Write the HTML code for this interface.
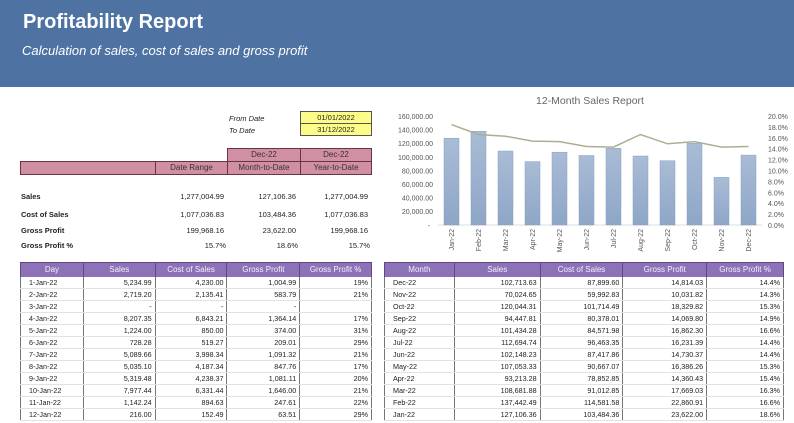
<!DOCTYPE html>
<html><head><meta charset="utf-8"><style>
*{margin:0;padding:0;box-sizing:border-box}
body{width:794px;height:423px;background:#fff;font-family:"Liberation Sans",sans-serif;position:relative;overflow:hidden;color:#222}
.ban{position:absolute;left:0;top:0;width:794px;height:87px;background:#4e73a3}
.t1{position:absolute;left:23px;top:11px;color:#fff;font-weight:bold;font-size:20px}
.t2{position:absolute;left:22px;top:43px;color:#fff;font-style:italic;font-size:13px}
.a{position:absolute;font-size:7.5px;white-space:nowrap}
.r{text-align:right}
.pk{position:absolute;background:#d18fa3;border:1px solid #6b3444;font-size:8px;text-align:center;line-height:12px;color:#333}
.yb{position:absolute;background:#fcfc88;border:1px solid #555;font-size:7.5px;text-align:center;line-height:11px}
table{position:absolute;border-collapse:collapse;font-size:7.2px}
th{background:#8e72b8;color:#f4f0fa;font-weight:normal;height:14px;font-size:8px;border-right:1px solid #5d4a80;border-left:1px solid #5d4a80}
td{height:12px;border-bottom:1px solid #e2e2e2;border-right:1px solid #777;padding:0 3px;text-align:right;white-space:nowrap}
td:first-child{text-align:left;padding-left:8px;border-left:1px solid #777}
table{border-top:1px solid #5d4a80}
</style></head><body>
<div class="ban"></div>
<div class="t1">Profitability Report</div>
<div class="t2">Calculation of sales, cost of sales and gross profit</div>

<div class="a" style="left:229px;top:114px;font-style:italic">From Date</div>
<div class="a" style="left:229px;top:126px;font-style:italic">To Date</div>
<div class="yb" style="left:300px;top:111px;width:72px;height:13px">01/01/2022</div>
<div class="yb" style="left:300px;top:123px;width:72px;height:13px">31/12/2022</div>

<div class="pk" style="left:227px;top:148px;width:74px;height:14px">Dec-22</div>
<div class="pk" style="left:300px;top:148px;width:72px;height:14px">Dec-22</div>
<div class="pk" style="left:20px;top:161px;width:136px;height:14px"></div>
<div class="pk" style="left:155px;top:161px;width:73px;height:14px">Date Range</div>
<div class="pk" style="left:227px;top:161px;width:74px;height:14px">Month-to-Date</div>
<div class="pk" style="left:300px;top:161px;width:72px;height:14px">Year-to-Date</div>

<div class="a" style="left:21px;top:192px;font-weight:bold">Sales</div>
<div class="a" style="left:21px;top:210px;font-weight:bold">Cost of Sales</div>
<div class="a" style="left:21px;top:226px;font-weight:bold">Gross Profit</div>
<div class="a" style="left:21px;top:241px;font-weight:bold">Gross Profit %</div>
<div class="a r" style="left:150px;width:74px;top:192px">1,277,004.99</div>
<div class="a r" style="left:150px;width:74px;top:210px">1,077,036.83</div>
<div class="a r" style="left:150px;width:74px;top:226px">199,968.16</div>
<div class="a r" style="left:150px;width:76px;top:241px">15.7%</div>
<div class="a r" style="left:222px;width:74px;top:192px">127,106.36</div>
<div class="a r" style="left:222px;width:74px;top:210px">103,484.36</div>
<div class="a r" style="left:222px;width:74px;top:226px">23,622.00</div>
<div class="a r" style="left:222px;width:76px;top:241px">18.6%</div>
<div class="a r" style="left:294px;width:74px;top:192px">1,277,004.99</div>
<div class="a r" style="left:294px;width:74px;top:210px">1,077,036.83</div>
<div class="a r" style="left:294px;width:74px;top:226px">199,968.16</div>
<div class="a r" style="left:294px;width:76px;top:241px">15.7%</div>

<svg style="position:absolute;left:390px;top:90px" width="404" height="170" font-family="Liberation Sans,sans-serif">
<text x="200" y="14" text-anchor="middle" font-size="10.5" fill="#666">12-Month Sales Report</text>
<defs><linearGradient id="g" x1="0" y1="0" x2="0" y2="1"><stop offset="0" stop-color="#a9bcd6"/><stop offset="1" stop-color="#8ea6c7"/></linearGradient></defs>
<g font-size="7" fill="#555" text-anchor="end">
<text x="43" y="29">160,000.00</text><text x="43" y="42.6">140,000.00</text><text x="43" y="56.2">120,000.00</text><text x="43" y="69.8">100,000.00</text><text x="43" y="83.4">80,000.00</text><text x="43" y="97">60,000.00</text><text x="43" y="110.6">40,000.00</text><text x="43" y="124.2">20,000.00</text><text x="40" y="137.8">-</text>
</g>
<g font-size="7" fill="#555">
<text x="378" y="29">20.0%</text><text x="378" y="39.9">18.0%</text><text x="378" y="50.8">16.0%</text><text x="378" y="61.7">14.0%</text><text x="378" y="72.6">12.0%</text><text x="378" y="83.5">10.0%</text><text x="378" y="94.4">8.0%</text><text x="378" y="105.3">6.0%</text><text x="378" y="116.2">4.0%</text><text x="378" y="127.1">2.0%</text><text x="378" y="138">0.0%</text>
</g>
<line x1="48" y1="135" x2="372" y2="135" stroke="#ddd"/>
<g fill="url(#g)" stroke="#8aa0c0" stroke-width="0.5">
<rect x="54" y="48.2" width="15" height="86.8"/>
<rect x="81" y="41.3" width="15" height="93.7"/>
<rect x="108" y="61" width="15" height="74"/>
<rect x="135" y="71.6" width="15" height="63.4"/>
<rect x="162" y="62.2" width="15" height="72.8"/>
<rect x="189" y="65.5" width="15" height="69.5"/>
<rect x="216" y="58.3" width="15" height="76.7"/>
<rect x="243" y="66" width="15" height="69"/>
<rect x="270" y="70.7" width="15" height="64.3"/>
<rect x="297" y="53.3" width="15" height="81.7"/>
<rect x="324" y="87.4" width="15" height="47.6"/>
<rect x="351" y="65.1" width="15" height="69.9"/>
</g>
<polyline fill="none" stroke="#a9b092" stroke-width="1.5" points="61.5,34.6 88.5,44.5 115.5,46.2 142.5,51.1 169.5,51.6 196.5,56.5 223.5,57.1 250.5,44.5 277.5,53.8 304.5,51.6 331.5,57.1 358.5,56.5"/>
<g font-size="7" fill="#555" text-anchor="end">
<text transform="translate(64,139) rotate(-90)">Jan-22</text>
<text transform="translate(91,139) rotate(-90)">Feb-22</text>
<text transform="translate(118,139) rotate(-90)">Mar-22</text>
<text transform="translate(145,139) rotate(-90)">Apr-22</text>
<text transform="translate(172,139) rotate(-90)">May-22</text>
<text transform="translate(199,139) rotate(-90)">Jun-22</text>
<text transform="translate(226,139) rotate(-90)">Jul-22</text>
<text transform="translate(253,139) rotate(-90)">Aug-22</text>
<text transform="translate(280,139) rotate(-90)">Sep-22</text>
<text transform="translate(307,139) rotate(-90)">Oct-22</text>
<text transform="translate(334,139) rotate(-90)">Nov-22</text>
<text transform="translate(361,139) rotate(-90)">Dec-22</text>
</g>
</svg>

<table style="left:20px;top:262px;width:352px">
<colgroup><col style="width:63px"><col style="width:72px"><col style="width:72px"><col style="width:73px"><col style="width:72px"></colgroup>
<tr><th>Day</th><th>Sales</th><th>Cost of Sales</th><th>Gross Profit</th><th>Gross Profit %</th></tr>
<tr><td>1-Jan-22</td><td>5,234.99</td><td>4,230.00</td><td>1,004.99</td><td>19%</td></tr>
<tr><td>2-Jan-22</td><td>2,719.20</td><td>2,135.41</td><td>583.79</td><td>21%</td></tr>
<tr><td>3-Jan-22</td><td>-</td><td>-</td><td>-</td><td></td></tr>
<tr><td>4-Jan-22</td><td>8,207.35</td><td>6,843.21</td><td>1,364.14</td><td>17%</td></tr>
<tr><td>5-Jan-22</td><td>1,224.00</td><td>850.00</td><td>374.00</td><td>31%</td></tr>
<tr><td>6-Jan-22</td><td>728.28</td><td>519.27</td><td>209.01</td><td>29%</td></tr>
<tr><td>7-Jan-22</td><td>5,089.66</td><td>3,998.34</td><td>1,091.32</td><td>21%</td></tr>
<tr><td>8-Jan-22</td><td>5,035.10</td><td>4,187.34</td><td>847.76</td><td>17%</td></tr>
<tr><td>9-Jan-22</td><td>5,319.48</td><td>4,238.37</td><td>1,081.11</td><td>20%</td></tr>
<tr><td>10-Jan-22</td><td>7,977.44</td><td>6,331.44</td><td>1,646.00</td><td>21%</td></tr>
<tr><td>11-Jan-22</td><td>1,142.24</td><td>894.63</td><td>247.61</td><td>22%</td></tr>
<tr><td>12-Jan-22</td><td>216.00</td><td>152.49</td><td>63.51</td><td>29%</td></tr>
</table>

<table style="left:384px;top:262px;width:400px">
<colgroup><col style="width:70px"><col style="width:86px"><col style="width:83px"><col style="width:84px"><col style="width:77px"></colgroup>
<tr><th>Month</th><th>Sales</th><th>Cost of Sales</th><th>Gross Profit</th><th>Gross Profit %</th></tr>
<tr><td>Dec-22</td><td>102,713.63</td><td>87,899.60</td><td>14,814.03</td><td>14.4%</td></tr>
<tr><td>Nov-22</td><td>70,024.65</td><td>59,992.83</td><td>10,031.82</td><td>14.3%</td></tr>
<tr><td>Oct-22</td><td>120,044.31</td><td>101,714.49</td><td>18,329.82</td><td>15.3%</td></tr>
<tr><td>Sep-22</td><td>94,447.81</td><td>80,378.01</td><td>14,069.80</td><td>14.9%</td></tr>
<tr><td>Aug-22</td><td>101,434.28</td><td>84,571.98</td><td>16,862.30</td><td>16.6%</td></tr>
<tr><td>Jul-22</td><td>112,694.74</td><td>96,463.35</td><td>16,231.39</td><td>14.4%</td></tr>
<tr><td>Jun-22</td><td>102,148.23</td><td>87,417.86</td><td>14,730.37</td><td>14.4%</td></tr>
<tr><td>May-22</td><td>107,053.33</td><td>90,667.07</td><td>16,386.26</td><td>15.3%</td></tr>
<tr><td>Apr-22</td><td>93,213.28</td><td>78,852.85</td><td>14,360.43</td><td>15.4%</td></tr>
<tr><td>Mar-22</td><td>108,681.88</td><td>91,012.85</td><td>17,669.03</td><td>16.3%</td></tr>
<tr><td>Feb-22</td><td>137,442.49</td><td>114,581.58</td><td>22,860.91</td><td>16.6%</td></tr>
<tr><td>Jan-22</td><td>127,106.36</td><td>103,484.36</td><td>23,622.00</td><td>18.6%</td></tr>
</table>
</body></html>
